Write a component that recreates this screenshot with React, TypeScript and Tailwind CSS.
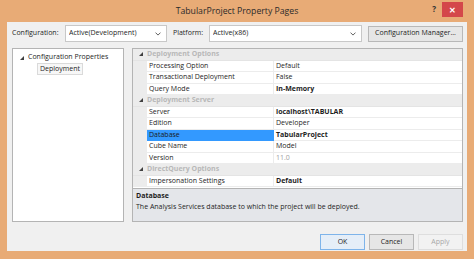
import { useState } from 'react';

type Row = { name: string; value?: string; bold?: boolean; dim?: boolean; category?: boolean };

const rows: Row[] = [
  { name: 'Deployment Options', category: true },
  { name: 'Processing Option', value: 'Default' },
  { name: 'Transactional Deployment', value: 'False' },
  { name: 'Query Mode', value: 'In-Memory', bold: true },
  { name: 'Deployment Server', category: true },
  { name: 'Server', value: 'localhost\\TABULAR', bold: true },
  { name: 'Edition', value: 'Developer' },
  { name: 'Database', value: 'TabularProject', bold: true },
  { name: 'Cube Name', value: 'Model' },
  { name: 'Version', value: '11.0', dim: true },
  { name: 'DirectQuery Options', category: true },
  { name: 'Impersonation Settings', value: 'Default', bold: true },
];

function Expander() {
  return (
    <svg width="4" height="4" viewBox="0 0 4 4" className="shrink-0">
      <path d="M4 0 L4 4 L0 4 Z" fill="#404040" />
    </svg>
  );
}

function Chevron() {
  return (
    <svg width="6" height="4" viewBox="0 0 6 4" className="shrink-0">
      <path d="M0.5 0.6 L3 3.1 L5.5 0.6" fill="none" stroke="#606060" strokeWidth="1" />
    </svg>
  );
}

function Select({ value, className }: { value: string; className: string }) {
  return (
    <div className={`h-[17px] bg-white border border-[#c8c8c8] flex items-center pl-[3px] pr-[5px] ${className}`}>
      <span className="flex-1 truncate">{value}</span>
      <Chevron />
    </div>
  );
}

function Button({ label, primary, disabled }: { label: string; primary?: boolean; disabled?: boolean }) {
  return (
    <button
      className={`h-[16px] w-[45px] flex items-center justify-center border ${
        primary ? 'border-[#7eb4ea] bg-[#e5eef8]' : disabled ? 'border-[#dedede] bg-[#f2f2f2] text-[#a8a8a8]' : 'border-[#b8b8b8] bg-[#e6e6e6]'
      }`}
    >
      {label}
    </button>
  );
}

export default function App() {
  const [selected] = useState('Database');

  return (
    <div
      className="w-[474px] h-[259px] bg-[#e8ab76] flex flex-col text-[7px] text-[#1e1e1e] overflow-hidden whitespace-nowrap"
      style={{ fontFamily: '"Open Sans", "Noto Sans", sans-serif' }}
    >
      {/* title bar */}
      <div className="h-[22px] flex items-center relative shrink-0">
        <div className="flex-1 text-center text-[8.7px] text-[#2a2a2a] pt-[1px]">TabularProject Property Pages</div>
        <div className="absolute right-[38px] top-[3px] text-[8px] font-bold text-[#333]">?</div>
        <div className="absolute right-[11px] top-[2px] w-[21px] h-[15px] bg-[#d4474a] flex items-center justify-center text-white text-[8px] font-bold">
          ✕
        </div>
      </div>

      {/* client area */}
      <div className="flex-1 mx-[7px] mb-[8px] bg-[#f0f0f0] flex flex-col pl-[5px] pr-[4px] pt-[3px]">
        <div className="h-[17px] flex items-center">
          <span className="w-[53px]">Configuration:</span>
          <Select value="Active(Development)" className="w-[102px]" />
          <span className="ml-[6px] w-[36px]">Platform:</span>
          <Select value="Active(x86)" className="w-[153px]" />
          <button className="ml-[6px] h-[16px] flex-1 border border-[#b8b8b8] bg-[#e6e6e6] flex items-center justify-center">
            Configuration Manager...
          </button>
        </div>

        <div className="mt-[6px] h-[174px] flex gap-[8px]">
          {/* tree */}
          <div className="w-[112px] bg-white border border-[#b4b4b4] pt-[3px] pl-[7px]">
            <div className="flex items-center gap-[4px] h-[11px]">
              <Expander />
              <span>Configuration Properties</span>
            </div>
            <div className="ml-[17px] inline-block border border-[#dadada] bg-[#f7f7f7] px-[2px] leading-[10px]">
              Deployment
            </div>
          </div>

          {/* property grid */}
          <div className="flex-1 border border-[#b4b4b4] flex flex-col bg-[#f0f0f0]">
            <div className="h-[140px] flex flex-col bg-white">
              {rows.map((r) =>
                r.category ? (
                  <div key={r.name} className="h-[11.5px] flex items-center bg-[#ececec] border-b border-[#e4e4e4]">
                    <div className="w-[14px] flex justify-center pl-[2px]">
                      <Expander />
                    </div>
                    <span className="font-bold text-[#b8b8b8]">{r.name}</span>
                  </div>
                ) : (
                  <div key={r.name} className="h-[11.5px] flex">
                    <div className="w-[14px] bg-[#ececec]" />
                    <div
                      className={`w-[127px] flex items-center pl-[2px] border-b border-r ${
                        r.name === selected ? 'bg-[#3399ff] text-[#1a1a1a] border-[#3399ff]' : 'border-[#ececec]'
                      }`}
                    >
                      {r.name}
                    </div>
                    <div
                      className={`flex-1 flex items-center pl-[2px] border-b border-[#ececec] ${r.bold ? 'font-bold' : ''} ${
                        r.dim ? 'text-[#a0a0a0]' : ''
                      }`}
                    >
                      {r.value}
                    </div>
                  </div>
                )
              )}
            </div>
            <div className="flex-1 border-t border-[#b4b4b4] bg-[#e4e6ea] px-[3px] pt-[2px] mt-[-1px]">
              <div className="font-bold">Database</div>
              <div>The Analysis Services database to which the project will be deployed.</div>
            </div>
          </div>
        </div>

        <div className="mt-[12px] flex justify-end gap-[4px]">
          <Button label="OK" primary />
          <Button label="Cancel" />
          <Button label="Apply" disabled />
        </div>
      </div>
    </div>
  );
}
